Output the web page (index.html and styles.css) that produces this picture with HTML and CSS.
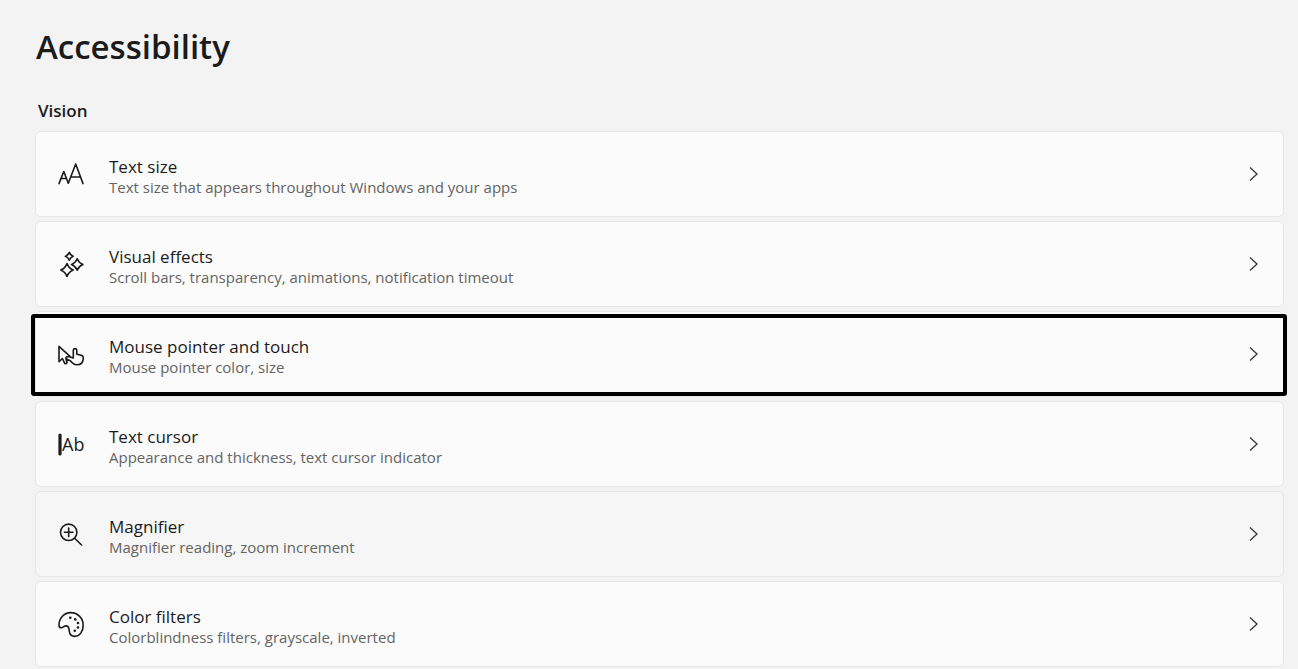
FILE: index.html
```html
<!DOCTYPE html>
<html lang="en">
<head>
<meta charset="utf-8">
<title>Accessibility</title>
<link rel="stylesheet" href="styles.css">
</head>
<body>
<main class="page">
  <h1 class="title">Accessibility</h1>
  <h2 class="section">Vision</h2>
  <nav class="list" aria-label="Vision">
    <a class="card" href="#text-size">
      <svg class="icon" viewBox="0 0 28 28" aria-hidden="true"><path d="M2 23.6L6.8 11.5L11.3 23.2L18.7 4L26 23.6M3.8 18.5H9.5M13.8 17H23.6"/></svg>
      <span class="text"><span class="name">Text size</span><span class="note">Text size that appears throughout Windows and your apps</span></span>
      <svg class="chevron" viewBox="0 0 10 16" aria-hidden="true"><path d="M1 1.5L8 8L1 14.5"/></svg>
    </a>
    <a class="card" href="#visual-effects">
      <svg class="icon" viewBox="0 0 28 28" aria-hidden="true"><path d="M12.3 2.4Q13.4 5.2 16.2 6.3Q13.4 7.4 12.3 10.2Q11.2 7.4 8.4 6.3Q11.2 5.2 12.3 2.4ZM20.2 8.7Q21.8 12.8 25.9 14.4Q21.8 16 20.2 20.1Q18.6 16 14.5 14.4Q18.6 12.8 20.2 8.7ZM10 13.6Q11.8 18.2 16.2 20Q11.8 21.8 10 26.4Q8.2 21.8 3.8 20Q8.2 18.2 10 13.6Z"/></svg>
      <span class="text"><span class="name">Visual effects</span><span class="note">Scroll bars, transparency, animations, notification timeout</span></span>
      <svg class="chevron" viewBox="0 0 10 16" aria-hidden="true"><path d="M1 1.5L8 8L1 14.5"/></svg>
    </a>
    <a class="card card-marked" href="#mouse-pointer">
      <svg class="icon" viewBox="0 0 28 28" aria-hidden="true"><path d="M13 16.3L2 6.3V21.8L5.4 18.5L7.7 23.3Q8.8 24.2 10 22.8L8.8 18L10.8 20.4M8.8 18Q9.4 16.4 11.5 16.6L16.3 18V10.2Q16.4 8.6 18 8.6Q19.7 8.6 19.8 10.2V14.2L24.2 15.3Q26.6 16 26.3 18.6Q25.8 24.8 20.2 24.8Q17 25 15.3 22.7Q13.4 20 10.8 19.5Q9 19.2 8.8 18Z"/></svg>
      <span class="text"><span class="name">Mouse pointer and touch</span><span class="note">Mouse pointer color, size</span></span>
      <svg class="chevron" viewBox="0 0 10 16" aria-hidden="true"><path d="M1 1.5L8 8L1 14.5"/></svg>
    </a>
    <a class="card" href="#text-cursor">
      <svg class="icon" viewBox="0 0 28 28" aria-hidden="true"><path class="bar" d="M3 5V24"/><text class="glyphs" x="5" y="21">Ab</text></svg>
      <span class="text"><span class="name">Text cursor</span><span class="note">Appearance and thickness, text cursor indicator</span></span>
      <svg class="chevron" viewBox="0 0 10 16" aria-hidden="true"><path d="M1 1.5L8 8L1 14.5"/></svg>
    </a>
    <a class="card card-hover" href="#magnifier">
      <svg class="icon" viewBox="0 0 28 28" aria-hidden="true"><circle cx="11.7" cy="12.3" r="8.2"/><path d="M17.6 18.2L24.6 25M11.7 8V16.6M7.4 12.3H16"/></svg>
      <span class="text"><span class="name">Magnifier</span><span class="note">Magnifier reading, zoom increment</span></span>
      <svg class="chevron" viewBox="0 0 10 16" aria-hidden="true"><path d="M1 1.5L8 8L1 14.5"/></svg>
    </a>
    <a class="card" href="#color-filters">
      <svg class="icon" viewBox="0 0 28 28" aria-hidden="true"><path d="M2 15.6C1.6 8.5 7 2.6 13.8 2.6C20.8 2.6 26.2 8.4 26.2 15C26.2 21.5 22.6 26.4 17.8 26.4C14.4 26.4 12.6 24.2 12.3 21.2C12 18.4 12 15.9 9.2 15.9C6.6 15.9 6.2 17.8 4.2 17.8C2.8 17.8 2.1 16.9 2 15.6Z"/><g class="dots"><circle cx="13.3" cy="7.7" r="1.3"/><circle cx="18.3" cy="9.4" r="1.3"/><circle cx="21" cy="13" r="1.3"/><circle cx="21" cy="17.5" r="1.3"/><circle cx="17.8" cy="20.7" r="1.3"/></g></svg>
      <span class="text"><span class="name">Color filters</span><span class="note">Colorblindness filters, grayscale, inverted</span></span>
      <svg class="chevron" viewBox="0 0 10 16" aria-hidden="true"><path d="M1 1.5L8 8L1 14.5"/></svg>
    </a>
  </nav>
</main>
</body>
</html>
```
FILE: styles.css
```css
body {
  margin: 0;
  background: #f3f3f3;
  color: #1b1b1b;
  font-family: "Open Sans", "Noto Sans", sans-serif;
}

.page {
  padding: 24px 14px 2px 35px;
}

.title {
  margin: 0 1px;
  font-size: 33px;
  line-height: 46px;
  font-weight: 600;
}

.section {
  margin: 29px 3px 8px;
  font-size: 17px;
  line-height: 24px;
  font-weight: 600;
}

.list {
  display: flex;
  flex-direction: column;
  gap: 4px;
}

.card {
  position: relative;
  box-sizing: border-box;
  min-height: 86px;
  display: flex;
  align-items: center;
  gap: 24px;
  padding: 0 24px 0 21px;
  border: 1px solid #e6e6e6;
  border-radius: 6px;
  background: #fbfbfb;
  color: inherit;
  text-decoration: none;
}

.card-hover {
  background: #f6f6f6;
}

.card-marked::after {
  content: "";
  position: absolute;
  inset: 2px -4px 0 -5px;
  border: 4px solid #000;
  border-radius: 3px;
}

.icon {
  flex: none;
  width: 28px;
  height: 28px;
  fill: none;
  stroke: #1b1b1b;
  stroke-width: 1.6;
  stroke-linecap: round;
  stroke-linejoin: round;
}

.bar {
  stroke-width: 3.2;
}

.glyphs {
  font-size: 18px;
  fill: #1b1b1b;
  stroke: none;
}

.dots {
  fill: #1b1b1b;
  stroke: none;
}

.text {
  flex: 1;
  display: flex;
  flex-direction: column;
  padding-top: 5px;
}

.name {
  font-size: 17px;
  line-height: 21px;
}

.note {
  font-size: 15px;
  line-height: 21px;
  color: #646464;
}

.chevron {
  flex: none;
  width: 10px;
  height: 16px;
  fill: none;
  stroke: #3c3c3c;
  stroke-width: 1.4;
}
```
